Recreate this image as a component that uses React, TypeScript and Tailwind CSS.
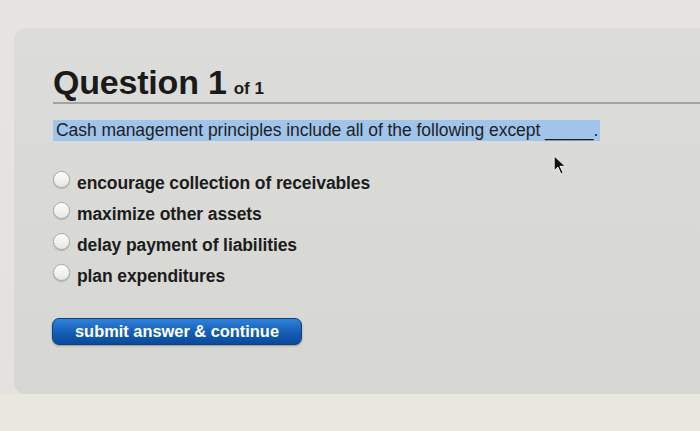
import React from "react";

const options = [
  "encourage collection of receivables",
  "maximize other assets",
  "delay payment of liabilities",
  "plan expenditures",
];

export default function App() {
  return (
    <div
      className="relative w-[700px] h-[431px] overflow-hidden bg-gradient-to-b from-[#e6e5e3] to-[#e2e1de] flex flex-col"
      style={{ fontFamily: '"Liberation Sans", Arial, sans-serif' }}
    >
      <div className="h-[28px] shrink-0" />
      <div className="ml-[14px] h-[366px] shrink-0 rounded-l-[12px] bg-gradient-to-b from-[#dcdcda] to-[#d6d6d2] pl-[39px] flex flex-col">
        <div className="mt-[37px] flex items-baseline text-[#1a1a1a] font-bold">
          <span className="text-[34px] leading-[34px] tracking-[-0.2px]">Question 1</span>
          <span className="ml-[7px] text-[17px] leading-[17px]">of 1</span>
        </div>
        <div className="mt-[3px] h-[2px] bg-[#a3a3a0]" />
        <div className="mt-[15px]">
          <span className="inline-block bg-[#a0c4ea] text-[#1f1f1f] text-[17.5px] leading-[21px] pl-[3px] pr-[2px] tracking-[-0.05px]">
            Cash management principles include all of the following except _____.
          </span>
        </div>
        <div className="mt-[25px] flex flex-col">
          {options.map((o) => (
            <div key={o} className="h-[31px] flex items-center">
              <span className="w-[17px] h-[17px] rounded-full border border-[#a9a9a6] bg-gradient-to-b from-[#ffffff] to-[#e6e6e4] shadow-[0_1px_1px_rgba(0,0,0,0.2)] -mt-[8px] shrink-0" />
              <span className="ml-[7px] text-[17.5px] font-bold text-[#1c1c1c] tracking-[-0.1px]">{o}</span>
            </div>
          ))}
        </div>
        <div className="mt-[26px]">
          <button className="w-[250px] h-[27px] -ml-[1px] rounded-[7px] border border-[#123f7c] bg-gradient-to-b from-[#2f82d8] via-[#1560b8] to-[#0b4a9c] shadow-[0_1px_2px_rgba(0,0,0,0.3)] text-left pl-[22px] text-white font-bold text-[16.4px] leading-[25px]">
            submit answer &amp; continue
          </button>
        </div>
      </div>
      <div className="flex-1 bg-[#e8e7e0]" />
      <svg className="absolute left-[553px] top-[155px]" width="15" height="21" viewBox="0 0 14 20">
        <path d="M1 1 L1 15 L4.5 11.5 L7.5 18 L9.5 17 L6.5 10.8 L11.5 10.8 Z" fill="#111" stroke="#fff" strokeWidth="0.8" />
      </svg>
    </div>
  );
}
